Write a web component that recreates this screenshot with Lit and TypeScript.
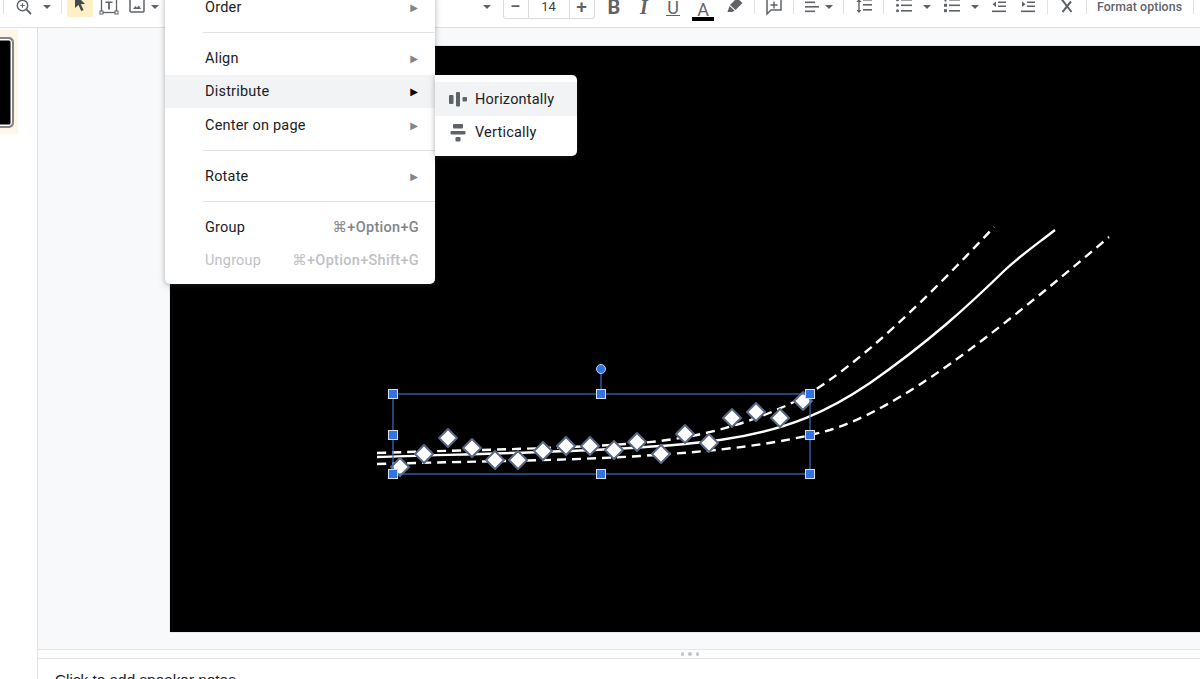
import { LitElement, html, css, svg } from "lit";
import { customElement } from "lit/decorators.js";

type Pt = [number, number];
const solid = "M377 457C500 453 640 451 720 440C790 430 830 410 870 383C930 341 968 306 1005 270C1021 255 1037 244 1055 230";
const upper = "M377 453C480 449.5 560 449 640 443C700 438 750 424 800 399C860 365 930 295 994 227";
const lower = "M377 464C480 461 560 461 640 456C720 451 780 444 830 430C900 408 990 338 1109 237";
const diamonds: Pt[] = [[400,467],[424,454],[448,438],[472,448],[495,460],[518,460],[543,451],[566,446],[590,446],[614,450],[637,442],[661,454],[685,434],[709,443],[732,418],[756,412],[780,418],[803,401]];
const handles: Pt[] = [[393,394],[601,394],[810,394],[393,435],[810,435],[393,474],[601,474],[810,474]];

const ic = (body: unknown) => html`<svg class="icon" viewBox="0 0 18 18" width="18" height="18">${body}</svg>`;
const caret = html`<span class="caret"></span>`;
const lines = (ys: number[], x1 = 2, x2 = 16) => ys.map((y) => svg`<rect x=${x1} y=${y} width=${x2 - x1} height="1.6"/>`);

const icons = {
  zoom: ic(svg`<circle cx="7.5" cy="7.5" r="5.2" fill="none" stroke="currentColor" stroke-width="1.5"/><path d="M11.5 11.5 16 16" stroke="currentColor" stroke-width="1.8"/><path d="M5.2 7.5h4.6M7.5 5.2v4.6" stroke="currentColor" stroke-width="1.1"/>`),
  cursor: html`<svg class="icon dark" viewBox="0 0 18 18" width="18" height="18"><path d="M4 0 14 10 9.8 10.2 12.6 16 10.2 17 7.5 11 4 14Z"/></svg>`,
  text: ic(svg`<rect x="1.5" y="0" width="15" height="14.5" fill="none" stroke="currentColor" stroke-width="1.3"/><path d="M5.5 3.5h7v1.6h-2.6v6.4H8.100V5.100H5.500Z"/><g fill="#fff" stroke="currentColor" stroke-width="1"><rect x="0" y="-1.500" width="3" height="3"/><rect x="15" y="-1.500" width="3" height="3"/><rect x="0" y="13" width="3" height="3"/><rect x="15" y="13" width="3" height="3"/></g>`),
  image: ic(svg`<rect x="2" y="0" width="14" height="14" rx="1" fill="none" stroke="currentColor" stroke-width="1.5"/><path d="M5 11 7.500 8 9 9.800 10.800 7.500 13 11Z"/>`),
  comment: ic(svg`<path d="M2 1h14v11H6l-4 4Z" fill="none" stroke="currentColor" stroke-width="1.5"/><path d="M8.300 3.500h1.400v2.800h2.800v1.400H9.700v2.800H8.300V7.700H5.500V6.300h2.800Z"/>`),
  pen: ic(svg`<path d="M11 0 16.500 5 9.500 12 4 7Z"/><path d="M3.500 8 8.500 12.500 6.500 14H1.500Z"/>`),
  align: ic(svg`<rect x="2" y="-1" width="14" height="1.600"/><rect x="2" y="3.500" width="10" height="1.600"/><rect x="2" y="8" width="14" height="1.600"/><rect x="2" y="12.500" width="10" height="1.600"/>`),
  spacing: ic(svg`${lines([1, 6, 11], 8, 17)}<path d="M4 1 1.500 4h5ZM4 15 1.500 12h5Z"/><rect x="3.300" y="3" width="1.400" height="10"/>`),
  bullets: ic(svg`${lines([1, 6.500, 12], 6, 17)}<circle cx="2.500" cy="1.800" r="1.500"/><circle cx="2.500" cy="7.300" r="1.500"/><circle cx="2.500" cy="12.800" r="1.500"/>`),
  numbers: ic(svg`${lines([1, 6.500, 12], 6, 17)}<rect x="1.500" y="0" width="2" height="3.500"/><rect x="1" y="5.800" width="3" height="3"/><rect x="1" y="11.200" width="3" height="3"/>`),
  outdent: ic(svg`<rect x="2" y="-2" width="14" height="3"/><rect x="8" y="3.500" width="8" height="1.500"/><rect x="8" y="7.500" width="8" height="1.500"/><rect x="2" y="12.500" width="14" height="1.600"/><path d="M6 3.500v5.500L2.500 6.200Z"/>`),
  indent: ic(svg`<rect x="2" y="-2" width="14" height="3"/><rect x="8" y="3.500" width="8" height="1.500"/><rect x="8" y="7.500" width="8" height="1.500"/><rect x="2" y="12.500" width="14" height="1.600"/><path d="M3 3.500v5.500L6.500 6.200Z"/>`),
  clear: ic(svg`<rect x="2.500" y="0" width="13" height="2"/><path d="M3.500 1 13.500 14M13 3.500 4.500 14" stroke="currentColor" stroke-width="2" fill="none"/>`),
  distH: html`<svg viewBox="0 0 18 18" width="18" height="18" class="icon"><rect x="0" y="5" width="4.500" height="9" rx="1"/><rect x="7" y="2" width="4" height="14.500" rx="1"/><rect x="13.500" y="7" width="4.500" height="4.500" rx="1"/></svg>`,
  distV: html`<svg viewBox="0 0 18 18" width="18" height="18" class="icon"><rect x="4" y="0" width="10" height="4.500" rx="1"/><rect x="1.500" y="7" width="15" height="3.500" rx="1"/><rect x="6.500" y="13" width="5" height="4.500" rx="1"/></svg>`,
};

const sep = html`<span class="sep"></span>`;
const letter = (cls: string, t: string) => html`<span class=${cls}>${t}</span>`;
// Each toolbar entry: the x of its centre and what it shows.
const toolbar: [number, unknown][] = [
  [3, sep], [24, icons.zoom], [47, caret], [61, sep],
  [80, html`<span class="tool-on">${icons.cursor}</span>`],
  [109, icons.text], [137, icons.image], [155, caret],
  [487, caret],
  [548.5, html`<span class="stepper"><span class="st st-end">−</span><span class="st st-mid">14</span><span class="st st-end">+</span></span>`],
  [614, letter("fmt bold", "B")], [644, letter("fmt ital", "I")], [673, letter("fmt under", "U")],
  [703, html`<span class="fmt colorA">A</span>`],
  [735, icons.pen], [754, sep], [774, icons.comment], [793, sep], [812, icons.align], [829, caret], [843, sep],
  [864, icons.spacing], [883, sep], [904, icons.bullets], [927, caret], [952, icons.numbers], [975, caret],
  [999, icons.outdent], [1028, icons.indent], [1047, sep], [1067, icons.clear], [1086, sep],
  [1139.5, html`<span class="fmt-opt">Format options</span>`], [1193, sep],
];

@customElement("app-root")
export class AppRoot extends LitElement {
  static styles = css`
    :host { display: block; position: relative; width: 1200px; height: 679px; overflow: hidden; background: #fff; font-family: Roboto, "Liberation Sans", sans-serif; }
    .page { display: flex; flex-direction: column; height: 679px; }
    .toolbar { display: flex; flex: none; padding-bottom: 13px; box-sizing: border-box; border-bottom: 1px solid #dfe1e5; align-items: center; overflow: visible; height: 28px; background: #fff; color: #5f6368; }
    .cell { display: flex; justify-content: center; align-items: center; flex: none; height: 14px; }
    .icon { fill: currentColor; color: #5f6368; flex: none; overflow: visible; }
    .icon.dark { color: #3c4043; }
    .caret { width: 0; height: 0; border: 4.5px solid transparent; border-top: 4.5px solid #5f6368; border-bottom: 0; flex: none; }
    .sep { width: 1px; height: 20px; background: #dfe1e5; flex: none; margin-top: -6px; }
    .tool-on { display: flex; width: 26px; height: 30px; margin-top: -10px; padding-top: 2px; box-sizing: border-box; background: #feefc3; opacity: .95; align-items: center; justify-content: center; border-radius: 2px; flex: none; }
    .stepper { display: flex; height: 20px; width: 92px; margin-top: 4px; flex: none; border: 1px solid #dadce0; border-top: 0; border-radius: 0 0 3px 3px; box-sizing: border-box; }
    .st { display: flex; align-items: center; justify-content: center; height: 100%; padding-bottom: 3px; box-sizing: border-box; font-size: 13px; line-height: 14px; color: #3c4043; }
    .st-end { width: 24px; font-size: 19px; font-weight: 500; color: #5f6368; }
    .st-mid { flex: 1; border-left: 1px solid #dadce0; border-right: 1px solid #dadce0; }
    .fmt { font-size: 18px; line-height: 18px; color: #5f6368; flex: none; }
    .bold { font-weight: 700; font-size: 20px; }
    .ital { font-family: "Liberation Serif", serif; font-style: italic; font-weight: 700; font-size: 20px; }
    .under { border-bottom: 1.5px solid #5f6368; line-height: 14px; padding: 0 1px; margin-top: 3px; }
    .colorA { border-bottom: 4px solid #000; line-height: 15px; padding: 0 5.5px; margin-top: 9px; font-weight: 400; }
    .fmt-opt { font-size: 12.300px; font-weight: 500; color: #5f6368; letter-spacing: .1px; white-space: nowrap; flex: none; }
    .main { display: flex; flex: 1; min-height: 0; }
    .strip { width: 38px; flex: none; border-right: 1px solid #dfe1e5; box-sizing: border-box; background: #fff; padding-top: 2px; }
    .thumb-on { width: 18px; height: 104px; background: #fef6e6; padding: 7px 4px 6px 0; box-sizing: border-box; }
    .thumb { width: 24px; height: 91px; margin-left: -10px; background: #000; border: 2px solid #80868b; box-shadow: inset 0 0 0 1.500px #fff; border-radius: 5px; box-sizing: border-box; }
    .work { flex: 1; min-width: 0; display: flex; flex-direction: column; background: #f8f9fa; }
    .stage { flex: 1; min-height: 0; padding: 18px 0 0 132px; }
    .slide { width: 1030px; height: 586px; background: #000; position: relative; box-shadow: 0 0 1px #9aa0a6; }
    .slide svg { position: absolute; inset: 0; }
    .grip { height: 10px; flex: none; background: #fff; border-top: 1px solid #e3e5e8; border-bottom: 1px solid #e3e5e8; box-sizing: border-box; display: flex; justify-content: center; align-items: center; gap: 4px; padding-left: 142px; }
    .grip i { width: 3.500px; height: 3.500px; border-radius: 50%; background: #c4c7cb; }
    .notes { height: 20px; flex: none; background: #fff; padding: 12px 0 0 17px; box-sizing: border-box; font: 15.350px/18px "Liberation Sans", Arial, sans-serif; color: #222; overflow: visible; white-space: nowrap; }
    .menu { position: absolute; left: 165px; top: -9.500px; width: 270px; height: 293.500px; background: #fff; border-radius: 0 0 5px 5px; box-shadow: 0 1px 4px rgba(60,64,67,.3), 0 2px 8px rgba(60,64,67,.15); color: #202124; font-size: 14.500px; letter-spacing: .2px; }
    .row { height: 33px; display: flex; align-items: center; justify-content: space-between; padding: 1px 16px 0 40px; box-sizing: border-box; }
    .row.up { padding-top: 0; padding-bottom: 1px; }
    .row.active { background: #f1f3f4; }
    .arrow { color: #80868b; font-size: 10px; margin-right: 1px; font-family: "DejaVu Sans", sans-serif; letter-spacing: 0; }
    .row.active .arrow { color: #000; }
    .key { color: #80868b; font-weight: 500; font-size: 14.500px; letter-spacing: .3px; font-family: Roboto, "DejaVu Sans", sans-serif; }
    .row.off, .row.off .key { color: #bdc1c6; }
    .rule { height: 18.500px; display: flex; align-items: center; padding-left: 38px; }
    .rule.tight { height: 18px; }
    .rule::after { content: ""; flex: 1; height: 1px; background: #dfe1e5; }
    .submenu { position: absolute; left: 435px; top: 75px; width: 142px; height: 81px; padding: 7px 0; box-sizing: border-box; background: #fff; border-radius: 0 5px 5px 0; box-shadow: 0 1px 4px rgba(60,64,67,.3), 0 2px 8px rgba(60,64,67,.15); color: #202124; font-size: 14.500px; letter-spacing: .2px; }
    .sub { height: 33.500px; display: flex; align-items: center; gap: 8px; padding: 1px 0 0 14px; box-sizing: border-box; }
    .sub.active { background: #f1f3f4; }
  `;

  private renderToolbar() {
    let end = 0;
    return toolbar.map(([x, content], i) => {
      const next = i + 1 < toolbar.length ? toolbar[i + 1][0] : 1200;
      const right = (x + next) / 2;
      const half = Math.min(x - end, right - x);
      const gap = x - half - end;
      end = x + half;
      return html`<span class="cell" style="width:${half * 2}px;margin-left:${gap}px">${content}</span>`;
    });
  }

  private renderArt() {
    return html`<svg width="1030" height="586" viewBox="170 46 1030 586">
      <g fill="none" stroke="#fff" stroke-width="2.400">
        <path d=${solid} />
        <path d=${upper} stroke-dasharray="9 6" />
        <path d=${lower} stroke-dasharray="9 6" />
      </g>
      <g fill="#fff" stroke="#5b6885" stroke-width="2" stroke-linejoin="round">
        ${diamonds.map(([x, y]) => svg`<path d="M${x} ${y - 9}L${x + 9} ${y}L${x} ${y + 9}L${x - 9} ${y}Z" />`)}
      </g>
      <rect x="393" y="394" width="417" height="80" fill="none" stroke="#3e6fc2" stroke-width="1.200" />
      <path d="M601 374V394" stroke="#3e6fc2" stroke-width="1.200" />
      <circle cx="601" cy="369" r="4.500" fill="#2f74e0" stroke="#c4d4ef" />
      ${handles.map(([x, y]) => svg`<rect x=${x - 4.5} y=${y - 4.5} width="9" height="9" fill="#2f74e0" stroke="#d5deed" />`)}
    </svg>`;
  }

  render() {
    const arrow = html`<span class="arrow">▶</span>`;
    return html`
      <div class="page">
        <div class="toolbar">${this.renderToolbar()}</div>
        <div class="main">
          <div class="strip"><div class="thumb-on"><div class="thumb"></div></div></div>
          <div class="work">
            <div class="stage"><div class="slide">${this.renderArt()}</div></div>
            <div class="grip"><i></i><i></i><i></i></div>
            <div class="notes">Click to add speaker notes</div>
          </div>
        </div>
      </div>
      <div class="menu">
        <div class="row"><span>Order</span>${arrow}</div>
        <div class="rule"></div>
        <div class="row up"><span>Align</span>${arrow}</div>
        <div class="row up active"><span>Distribute</span>${arrow}</div>
        <div class="row"><span>Center on page</span>${arrow}</div>
        <div class="rule"></div>
        <div class="row"><span>Rotate</span>${arrow}</div>
        <div class="rule tight"></div>
        <div class="row"><span>Group</span><span class="key">⌘+Option+G</span></div>
        <div class="row off"><span>Ungroup</span><span class="key">⌘+Option+Shift+G</span></div>
      </div>
      <div class="submenu">
        <div class="sub active">${icons.distH}<span>Horizontally</span></div>
        <div class="sub">${icons.distV}<span>Vertically</span></div>
      </div>
    `;
  }
}
